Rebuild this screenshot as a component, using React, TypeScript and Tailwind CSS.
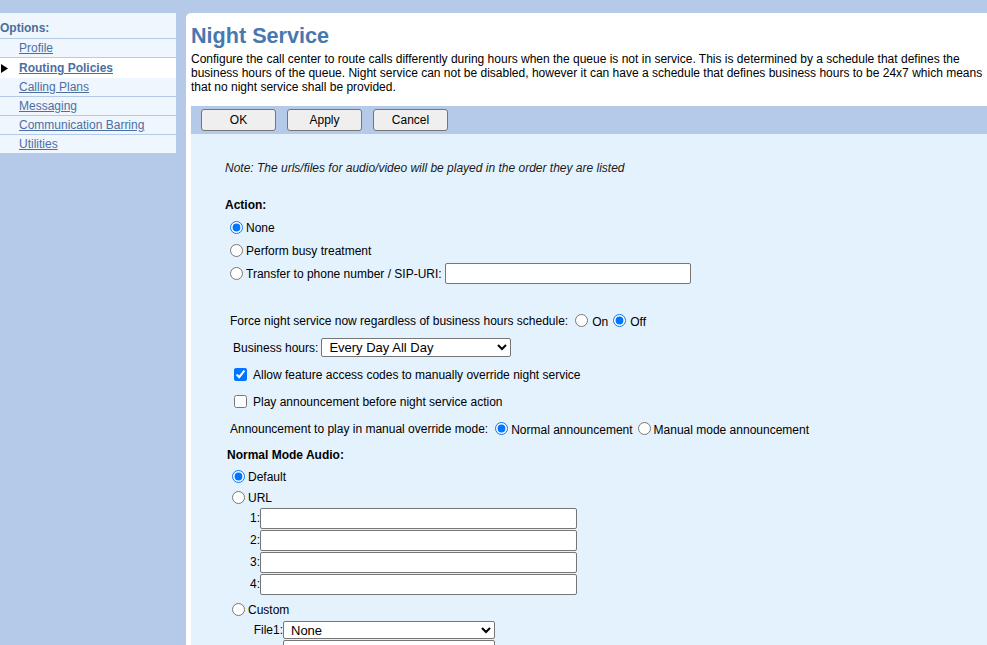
import React from "react";

const navItems = [
  "Profile",
  "Routing Policies",
  "Calling Plans",
  "Messaging",
  "Communication Barring",
  "Utilities",
];

const Radio = ({ name, checked, className = "" }: { name: string; checked?: boolean; className?: string }) => (
  <input
    type="radio"
    name={name}
    defaultChecked={checked}
    className={`m-0 h-[13px] w-[13px] shrink-0 ${className}`}
  />
);

const Checkbox = ({ checked }: { checked?: boolean }) => (
  <input type="checkbox" defaultChecked={checked} className="m-0 ml-[4px] h-[13px] w-[13px] shrink-0" />
);

export default function App() {
  return (
    <div className="min-h-[645px] bg-[#b5c9e9] pt-[13px] flex items-start font-['Liberation_Sans',Arial,sans-serif] text-[12px] text-black">
      {/* Sidebar */}
      <aside className="w-[186px] shrink-0">
        <div className="w-[176px] bg-[#eff6fe]">
          <div className="h-[26px] pt-[8px] border-b border-[#b5c9e9] font-bold leading-[14px] text-[#4b6d9a]">
            Options:
          </div>
          {navItems.map((item) =>
            item === "Routing Policies" ? (
              <div key={item} className="h-[20px] bg-white flex items-center">
                <div className="w-[19px] pl-[1px] flex items-center">
                  <svg width="7" height="9" viewBox="0 0 7 9">
                    <polygon points="0,0 7,4.5 0,9" fill="#000" />
                  </svg>
                </div>
                <a href="#" className="font-bold underline leading-[14px] text-[#4b6fa3]">
                  {item}
                </a>
              </div>
            ) : (
              <div key={item} className="h-[19px] border-b border-[#b5c9e9] flex items-center pl-[19px]">
                <a href="#" className="underline leading-[14px] text-[#4b6fa3]">
                  {item}
                </a>
              </div>
            )
          )}
        </div>
      </aside>

      {/* Main panel */}
      <main className="flex-1 min-w-0 min-h-[632px] bg-white rounded-tl-[5px] pl-[5px]">
        <h1 className="pt-[10px] text-[21.6px] leading-[26px] font-bold text-[#4878b0]">Night Service</h1>
        <p className="mt-[4px] leading-[13.8px]">
          Configure the call center to route calls differently during hours when the queue is not in service. This is
          determined by a schedule that defines the business hours of the queue. Night service can not be disabled,
          however it can have a schedule that defines business hours to be 24x7 which means that no night service shall
          be provided.
        </p>

        {/* Button bar */}
        <div className="mt-[12px] h-[28px] bg-[#b5c9e9] flex items-center gap-[11px] pl-[10px]">
          {["OK", "Apply", "Cancel"].map((b) => (
            <button
              key={b}
              className="w-[75px] h-[22px] border border-[#767676] bg-[#efefef] rounded-[3px] text-[12px] leading-[14px]"
            >
              {b}
            </button>
          ))}
        </div>

        {/* Form */}
        <div className="bg-[#e4f2fe] pl-[34px] pt-[27px] pb-[20px]">
          <p className="italic leading-[14px] text-[#1a1a1a]">
            Note: The urls/files for audio/video will be played in the order they are listed
          </p>

          <div className="mt-[23px] font-bold leading-[14px]">Action:</div>
          <div className="mt-[4px]">
            <div className="h-[23px] flex items-center">
              <Radio name="action" checked className="ml-[5px]" />
              <span className="ml-[3px]">None</span>
            </div>
            <div className="h-[23px] flex items-center">
              <Radio name="action" className="ml-[5px]" />
              <span className="ml-[3px]">Perform busy treatment</span>
            </div>
            <div className="h-[23px] flex items-center">
              <Radio name="action" className="ml-[5px]" />
              <span className="ml-[3px]">Transfer to phone number / SIP-URI:</span>
              <input
                type="text"
                className="ml-[3px] w-[246px] h-[21px] bg-white border border-[#767676] rounded-[2px]"
              />
            </div>
          </div>

          <div className="mt-[24px] pl-[5px]">
            <div className="h-[27px] pb-[4px] flex items-center">
              <span>Force night service now regardless of business hours schedule:</span>
              <Radio name="force" className="ml-[7px]" />
              <span className="ml-[4px] translate-y-[1px]">On</span>
              <Radio name="force" checked className="ml-[5px]" />
              <span className="ml-[4px] translate-y-[1px]">Off</span>
            </div>
            <div className="h-[27px] pb-[4px] flex items-center pl-[3px]">
              <span>Business hours:</span>
              <select className="ml-[3px] w-[190px] h-[19px] bg-white border border-[#767676] rounded-[2px] pl-[3px] text-[13px]">
                <option>Every Day All Day</option>
              </select>
            </div>
            <div className="h-[27px] pb-[4px] flex items-center">
              <Checkbox checked />
              <span className="ml-[6px]">Allow feature access codes to manually override night service</span>
            </div>
            <div className="h-[27px] pb-[4px] flex items-center">
              <Checkbox />
              <span className="ml-[6px]">Play announcement before night service action</span>
            </div>
            <div className="h-[27px] pb-[4px] flex items-center">
              <span>Announcement to play in manual override mode:</span>
              <Radio name="announce" checked className="ml-[7px]" />
              <span className="ml-[3px] translate-y-[1px]">Normal announcement</span>
              <Radio name="announce" className="ml-[5px]" />
              <span className="ml-[3px] translate-y-[1px]">Manual mode announcement</span>
            </div>
          </div>

          <div className="mt-[4px] ml-[2px] font-bold leading-[14px]">Normal Mode Audio:</div>
          <div className="mt-[4px]">
            <div className="h-[21px] flex items-center">
              <Radio name="audio" checked className="ml-[7px]" />
              <span className="ml-[3px]">Default</span>
            </div>
            <div className="h-[21px] flex items-center">
              <Radio name="audio" className="ml-[7px]" />
              <span className="ml-[3px]">URL</span>
            </div>
            {[1, 2, 3, 4].map((n) => (
              <div key={n} className="h-[22px] flex items-start">
                <span className="w-[35px] text-right leading-[21px]">{n}:</span>
                <input
                  type="text"
                  className="w-[317px] h-[21px] bg-white border border-[#767676] rounded-[2px]"
                />
              </div>
            ))}
            <div className="mt-[3px] h-[21px] flex items-center">
              <Radio name="audio" className="ml-[7px]" />
              <span className="ml-[3px]">Custom</span>
            </div>
            <div className="h-[20px] flex items-center">
              <span className="w-[58px] text-right">File1:</span>
              <select className="w-[212px] h-[18px] bg-white border border-[#767676] rounded-[2px] pl-[3px] text-[13px]">
                <option>None</option>
              </select>
            </div>
            <div className="h-[20px] flex items-start">
              <span className="w-[58px] text-right leading-[20px]">File2:</span>
              <select className="w-[212px] h-[18px] bg-white border border-[#767676] rounded-[2px] pl-[3px] text-[13px]">
                <option>None</option>
              </select>
            </div>
          </div>
        </div>
      </main>
    </div>
  );
}
